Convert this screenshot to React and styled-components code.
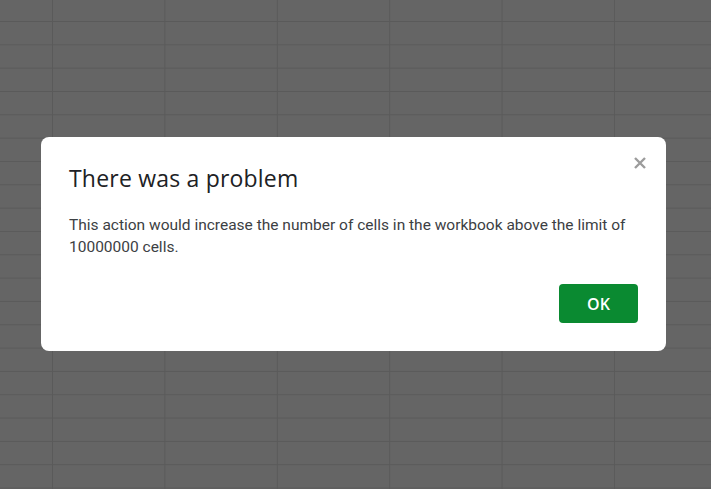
import styled, { createGlobalStyle } from 'styled-components';

const Global = createGlobalStyle`
  html, body {
    margin: 0;
    padding: 0;
  }
  body {
    font-family: Roboto, "Liberation Sans", Arial, sans-serif;
  }
`;

const Sheet = styled.div`
  width: 711px;
  height: 489px;
  box-sizing: border-box;
  padding: 0 4px 1px 0;
  display: flex;
  align-items: center;
  justify-content: center;
  background-color: #656565;
  background-image:
    linear-gradient(to right, #5a5a5a 1px, transparent 1px),
    linear-gradient(to bottom, #5a5a5a 1px, transparent 1px);
  background-size: 112.4px 23.333px;
  background-position: 52px 21px;
`;

const Dialog = styled.div`
  position: relative;
  width: 625px;
  box-sizing: border-box;
  padding: 27px 28px 28px;
  background: #fff;
  border-radius: 8px;
  display: flex;
  flex-direction: column;
`;

const Title = styled.h2`
  margin: 0;
  font-family: "Open Sans", Roboto, sans-serif;
  font-size: 23px;
  line-height: 28px;
  font-weight: 400;
  letter-spacing: 0.2px;
  color: #202124;
`;

const Message = styled.p`
  margin: 21.5px 0 0;
  font-size: 15.5px;
  line-height: 22px;
  color: #3c4043;
`;

const Actions = styled.div`
  display: flex;
  justify-content: flex-end;
  margin-top: 26.5px;
`;

const Button = styled.button`
  width: 79px;
  height: 39px;
  border: none;
  border-radius: 4px;
  background: #0a8a31;
  color: #fff;
  font-family: "Open Sans", Roboto, sans-serif;
  font-size: 16px;
  font-weight: 600;
  cursor: pointer;
`;

const Close = styled.button`
  position: absolute;
  top: 20px;
  right: 20px;
  width: 12px;
  height: 12px;
  box-sizing: content-box;
  padding: 0;
  border: none;
  background: none;
  display: flex;
  align-items: center;
  justify-content: center;
  cursor: pointer;
`;

const App = () => (
  <>
    <Global />
    <Sheet>
      <Dialog>
        <Close aria-label="Close">
          <svg width="12" height="12" viewBox="0 0 12 12">
            <path d="M1 1L11 11M11 1L1 11" stroke="#9c9c9c" strokeWidth="2.4" />
          </svg>
        </Close>
        <Title>There was a problem</Title>
        <Message>
          This action would increase the number of cells in the workbook above the limit of 10000000 cells.
        </Message>
        <Actions>
          <Button type="button">OK</Button>
        </Actions>
      </Dialog>
    </Sheet>
  </>
);

export default App;
